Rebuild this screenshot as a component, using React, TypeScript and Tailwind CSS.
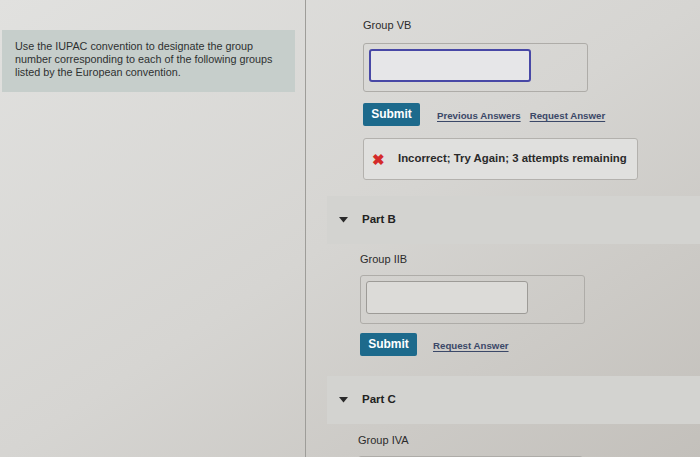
import React from "react";

/* ── Small pieces ─────────────────────────────────────────────────────────── */
function Caret() {
  return (
    <svg width="9" height="6" viewBox="0 0 9 6" className="shrink-0">
      <path d="M0 0 L9 0 L4.5 5.5 Z" fill="#2a2a2a" />
    </svg>
  );
}

function AnswerBox({ active }: { active?: boolean }) {
  return (
    <div className="w-[225px] h-[49px] rounded-[3px] border border-[#aeaca8] p-[5px]">
      <div
        className={`w-[162px] h-[33px] rounded-[3px] ${
          active ? "border-2 border-[#4848a6] bg-[#e6e6e8]" : "border-[1.5px] border-[#9d9b97] bg-[#dcdbd8]"
        }`}
      />
    </div>
  );
}

function SubmitButton() {
  return (
    <button className="h-[23px] w-[57px] rounded-[2px] bg-[#1d6a8c] text-[12px] font-bold text-white">
      Submit
    </button>
  );
}

function LinkText({ children }: { children: React.ReactNode }) {
  return (
    <span className="text-[9.7px] font-bold text-[#3b4868] underline underline-offset-2">
      {children}
    </span>
  );
}

function PartHeader({ label }: { label: string }) {
  return (
    <div className="ml-[21px] flex h-[48px] items-center bg-[#d3d3d0] pl-[12px]">
      <Caret />
      <span className="ml-[14px] text-[11.5px] font-bold text-[#222]">{label}</span>
    </div>
  );
}

/* ── Page ─────────────────────────────────────────────────────────────────── */
export default function App() {
  return (
    <div
      className="flex h-[457px] w-[700px] overflow-hidden bg-gradient-to-br from-[#e1e1df] via-[#d6d5d2] to-[#c3c0bb] text-[#2b2b2b]"
      style={{ fontFamily: '"Liberation Sans", Arial, sans-serif' }}
    >
      {/* Left: instructions */}
      <div className="w-[306px] shrink-0 border-r border-[#9e9d99] pt-[30px] pl-[2px] pr-[10px]">
        <div className="h-[62px] bg-[#c6cecb] pl-[13px] pt-[10px] text-[10.8px] leading-[13px] text-[#2e3131]">
          Use the IUPAC convention to designate the group
          <br />
          number corresponding to each of the following groups
          <br />
          listed by the European convention.
        </div>
      </div>

      {/* Right: parts */}
      <div className="flex-1">
        {/* Part A */}
        <div className="pl-[57px] pt-[18px]">
          <div className="text-[11px] leading-[14px]">Group VB</div>
          <div className="mt-[11px]">
            <AnswerBox active />
          </div>
          <div className="mt-[10px] flex items-center">
            <SubmitButton />
            <span className="ml-[17px]">
              <LinkText>Previous Answers</LinkText>
            </span>
            <span className="ml-[9px]">
              <LinkText>Request Answer</LinkText>
            </span>
          </div>
          <div className="mt-[12px] flex h-[42px] w-[275px] items-center rounded-[3px] border border-[#b3b1ad] bg-[#e0e0de] pl-[8px]">
            <span className="text-[15px] font-bold leading-none text-[#d42a2a]">✖</span>
            <span className="ml-[13px] text-[11.4px] font-bold text-[#2a2a2a]">
              Incorrect; Try Again; 3 attempts remaining
            </span>
          </div>
        </div>

        {/* Part B */}
        <div className="mt-[16px]">
          <PartHeader label="Part B" />
          <div className="pl-[54px]">
            <div className="mt-[8px] text-[11px] leading-[14px]">Group IIB</div>
            <div className="mt-[9px]">
              <AnswerBox />
            </div>
            <div className="mt-[8px] flex items-center">
              <SubmitButton />
              <span className="ml-[16px]">
                <LinkText>Request Answer</LinkText>
              </span>
            </div>
          </div>
        </div>

        {/* Part C */}
        <div className="mt-[20px]">
          <PartHeader label="Part C" />
          <div className="pl-[52px]">
            <div className="mt-[9px] text-[11px] leading-[14px]">Group IVA</div>
            <div className="mt-[9px]">
              <AnswerBox />
            </div>
          </div>
        </div>
      </div>
    </div>
  );
}
